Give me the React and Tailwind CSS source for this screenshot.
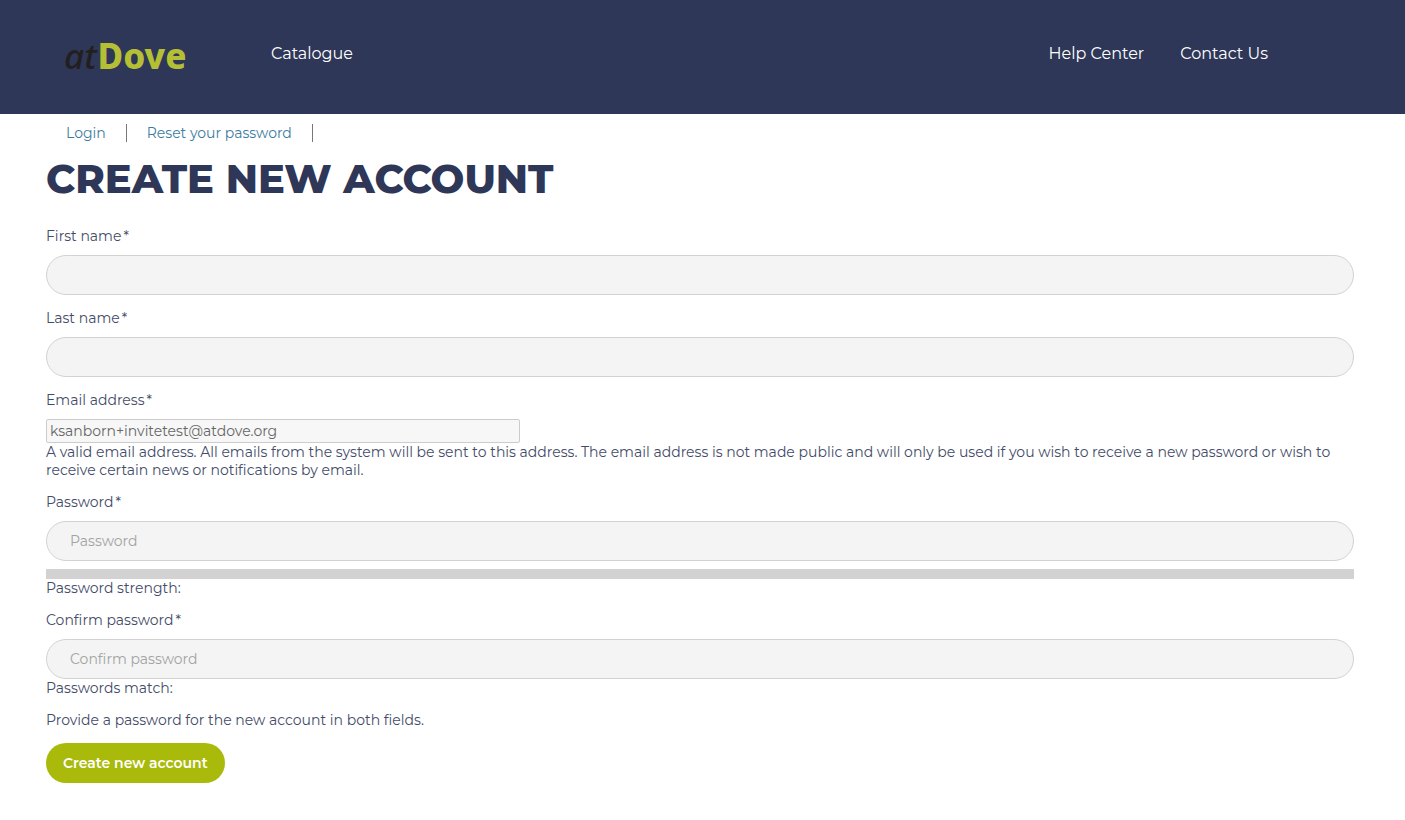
import React, { useState } from 'react';

const TABS = [
  { label: 'Login', href: '#login' },
  { label: 'Reset your password', href: '#reset' },
];

function Logo() {
  return (
    <a
      href="#home"
      aria-label="atDove"
      className="flex w-[119px] shrink-0 items-baseline gap-px font-['Noto_Sans',sans-serif] text-[35px] leading-10"
    >
      <span className="font-medium text-[#231f20] italic">at</span>
      <span className="font-extrabold text-[#b5bf35]">Dove</span>
    </a>
  );
}

function Label({ htmlFor, children }) {
  return (
    <label htmlFor={htmlFor} className="mb-2.5 flex gap-0.5">
      {children}
      <span>*</span>
    </label>
  );
}

function Field({ id, label, type = 'text', placeholder }) {
  const [value, setValue] = useState('');

  return (
    <>
      <Label htmlFor={id}>{label}</Label>
      <input
        id={id}
        type={type}
        value={value}
        placeholder={placeholder}
        onChange={(e) => setValue(e.target.value)}
        className="block h-10 w-full rounded-full border border-[#d2d2d2] bg-[#f4f4f4] px-[23px] placeholder:text-[#a3a3a3]"
      />
    </>
  );
}

export default function App() {
  const [email, setEmail] = useState('ksanborn+invitetest@atdove.org');

  return (
    <div className="min-h-screen bg-white font-[Montserrat,Inter,sans-serif] text-sm leading-[18px] font-normal text-[#434b68]">
      {/* Header */}
      <header className="flex h-[114px] items-start bg-[#2e3757] pt-9 pr-[137px] pl-16">
        <Logo />
        <nav className="ml-[88px] flex flex-1 justify-between pt-1.5 text-base leading-6 text-white">
          <a href="#catalogue">Catalogue</a>
          <div className="flex gap-9">
            <a href="#help">Help Center</a>
            <a href="#contact">Contact Us</a>
          </div>
        </nav>
      </header>

      <main className="pt-2.5 pr-[51px] pb-9 pl-[46px]">
        <nav className="flex">
          {TABS.map((tab) => (
            <a key={tab.label} href={tab.href} className="border-r border-[#777777] px-5 text-[#3c7c9e]">
              {tab.label}
            </a>
          ))}
        </nav>

        <h1 className="mt-3 text-[40px] leading-[50px] font-extrabold text-[#2e3757] uppercase">Create new account</h1>

        <form className="mt-[23px] flex flex-col gap-3.5" onSubmit={(e) => e.preventDefault()}>
          <div>
            <Field id="first-name" label="First name" />
          </div>
          <div>
            <Field id="last-name" label="Last name" />
          </div>

          <div>
            <Label htmlFor="email">Email address</Label>
            <input
              id="email"
              type="email"
              value={email}
              onChange={(e) => setEmail(e.target.value)}
              className="block h-6 w-[474px] max-w-full rounded-xs border border-[#cccccc] bg-[#f7f7f7] px-[3px] text-[#666666]"
            />
            <p>
              A valid email address. All emails from the system will be sent to this address. The email address is not
              made public and will only be used if you wish to receive a new password or wish to receive certain news or
              notifications by email.
            </p>
          </div>

          <div>
            <Field id="password" label="Password" type="password" placeholder="Password" />
            <div className="mt-2 h-2.5 bg-[#d2d2d2]" />
            <p>Password strength:</p>
          </div>

          <div>
            <Field id="confirm" label="Confirm password" type="password" placeholder="Confirm password" />
            <p>Passwords match:</p>
          </div>

          <p>Provide a password for the new account in both fields.</p>

          <button type="submit" className="h-10 self-start rounded-full bg-[#a9ba0b] px-[17px] font-semibold text-white">
            Create new account
          </button>
        </form>
      </main>
    </div>
  );
}
